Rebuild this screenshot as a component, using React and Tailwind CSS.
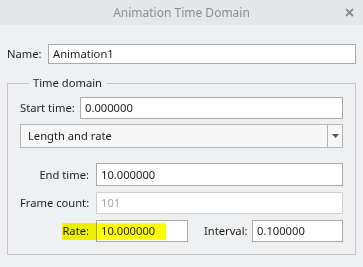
import React from "react";

const Field = ({ value, muted, className = "" }) => (
  <div
    className={`h-full flex items-center bg-white border px-[4px] whitespace-nowrap ${
      muted ? "border-[#cfcfcf] text-[#a8a8a8]" : "border-[#a9a9a9] text-[#1e1e1e]"
    } ${className}`}
  >
    {value}
  </div>
);

export default function App() {
  return (
    <div
      className="w-[363px] h-[267px] bg-[#eef0f2] text-[#1e1e1e] text-[11.2px] leading-[16px] flex flex-col whitespace-nowrap"
      style={{ fontFamily: '"Noto Sans", "Open Sans", sans-serif' }}
    >
      {/* title bar */}
      <div className="relative h-[25px] bg-[#e6e7e9] flex items-center justify-center text-[#8c8c8c] text-[12px]">
        Animation Time Domain
        <svg
          className="absolute right-[9px] top-[8px]"
          width="9"
          height="9"
          viewBox="0 0 9 9"
        >
          <path d="M1 1L8 8M8 1L1 8" stroke="#8a8a8a" strokeWidth="1.8" />
        </svg>
      </div>

      {/* name */}
      <div className="mt-[19px] px-[7px] flex items-center h-[20px]">
        <span className="w-[41px]">Name:</span>
        <Field value="Animation1" className="flex-1" />
      </div>

      {/* time domain group */}
      <fieldset className="mt-[11px] mx-[7px] border border-[#c6c6c6] px-[12px] pt-[6px] pb-[12px]">
        <legend className="ml-[9px] px-[4px]">Time domain</legend>

        <div className="flex items-center h-[22px]">
          <span className="w-[60px]">Start time:</span>
          <Field value="0.000000" className="flex-1" />
        </div>

        <div className="mt-[5px] h-[24px] flex bg-[#f7f7f7] border border-[#b4b4b4]">
          <div className="flex-1 flex items-center pl-[7px]">Length and rate</div>
          <div className="w-[15px] border-l border-[#b4b4b4] flex items-center justify-center">
            <svg width="7" height="4" viewBox="0 0 7 4">
              <path d="M0 0H7L3.5 4Z" fill="#555" />
            </svg>
          </div>
        </div>

        <div className="mt-[15px] flex items-center h-[23px]">
          <span className="w-[76px] pr-[7px] text-right">End time:</span>
          <Field value="10.000000" className="flex-1" />
        </div>

        <div className="mt-[6px] flex items-center h-[22px]">
          <span className="w-[76px] pr-[7px] text-right">Frame count:</span>
          <Field value="101" muted className="flex-1" />
        </div>

        <div className="relative mt-[6px] flex items-center h-[22px]">
          <span className="w-[76px] pr-[7px] text-right">Rate:</span>
          <Field value="10.000000" className="w-[92px]" />
          <span className="ml-[16px] w-[48px]">Interval:</span>
          <Field value="0.100000" className="flex-1" />
          <div className="absolute left-[42px] top-[3px] w-[104px] h-[17px] bg-[#ffff00] mix-blend-multiply" />
        </div>
      </fieldset>
    </div>
  );
}
